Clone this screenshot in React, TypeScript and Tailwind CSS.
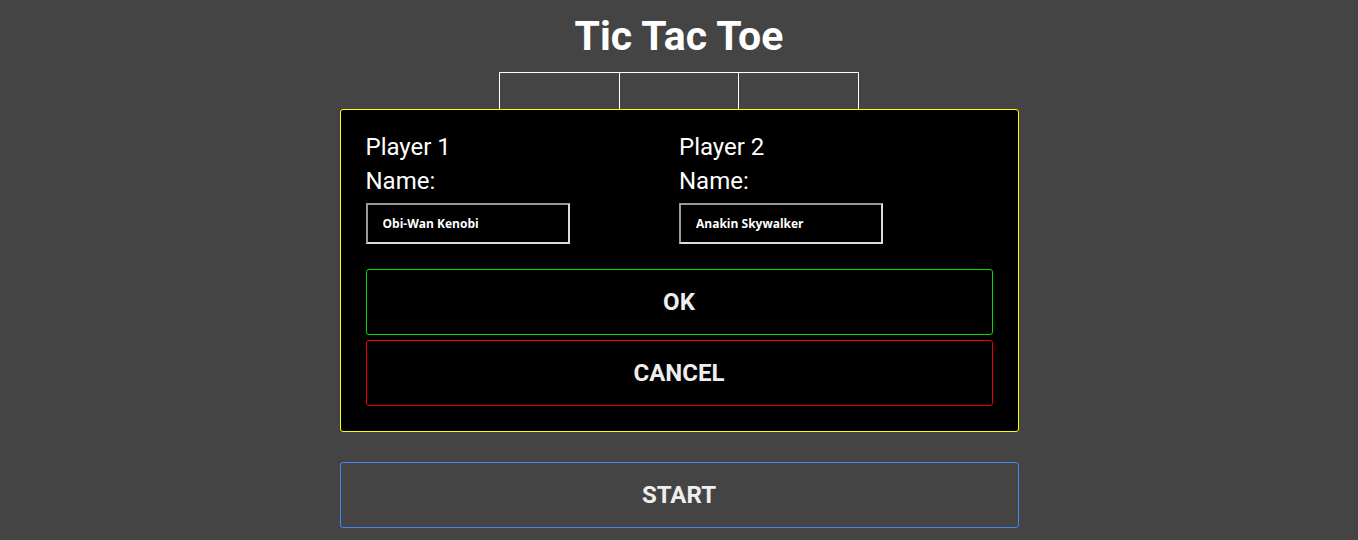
import {useState} from "react";

const cells = Array.from({length: 9}, (_, i) => i);

function PlayerField({label, value}: {label: string; value: string}) {
    return (
        <div className="flex flex-col">
            <span className="text-[24px] leading-[34px] text-white">{label}</span>
            <span className="text-[24px] leading-[34px] text-white">Name:</span>
            <input
                defaultValue={value}
                className="mt-[5px] h-[41px] w-[204px] border-2 border-t-[#999999] border-l-[#999999]
                border-b-[#dddddd] border-r-[#dddddd] bg-black pl-[15px] text-[12px] font-bold text-white
                outline-none [font-family:'Open_Sans',sans-serif]"/>
        </div>
    );
}

export default function App() {
    const [showModal] = useState(true);

    return (
        <div className="min-h-[540px] bg-[#444444] [font-family:Roboto,sans-serif]">
            <div className="flex flex-col items-center">
                <h1 className="mt-[12px] text-[41px] font-bold leading-[48px] text-white">Tic Tac Toe</h1>

                <div className="relative mt-[12px] w-1/2">
                    <div className="mx-auto grid h-[360px] w-[360px] grid-cols-3 overflow-hidden border-l border-t border-white">
                        {cells.map((c) => (
                            <div key={c} className="h-[120px] border-b border-r border-white"/>
                        ))}
                    </div>

                    {showModal && (
                        <div
                            className="absolute left-0 right-0 top-[37px] rounded-[3px] border border-[#ffff00]
                            bg-black px-[25px] pb-[25px] pt-[20px]">
                            <div className="grid grid-cols-2">
                                <PlayerField label="Player 1" value="Obi-Wan Kenobi"/>
                                <PlayerField label="Player 2" value="Anakin Skywalker"/>
                            </div>
                            <button
                                className="mt-[25px] flex h-[66px] w-full items-center justify-center rounded-[3px]
                                border border-[#00e000] bg-black text-[24px] font-bold text-[#eeeeee]">
                                OK
                            </button>
                            <button
                                className="mt-[5px] flex h-[66px] w-full items-center justify-center rounded-[3px]
                                border border-[#ee0000] bg-black text-[24px] font-bold text-[#eeeeee]">
                                CANCEL
                            </button>
                        </div>
                    )}
                </div>

                <button
                    className="mb-[12px] mt-[30px] flex h-[66px] w-1/2 items-center justify-center rounded-[3px]
                    border border-[#4285f4] text-[24px] font-bold text-[#eeeeee]">
                    START
                </button>
            </div>
        </div>
    );
}
